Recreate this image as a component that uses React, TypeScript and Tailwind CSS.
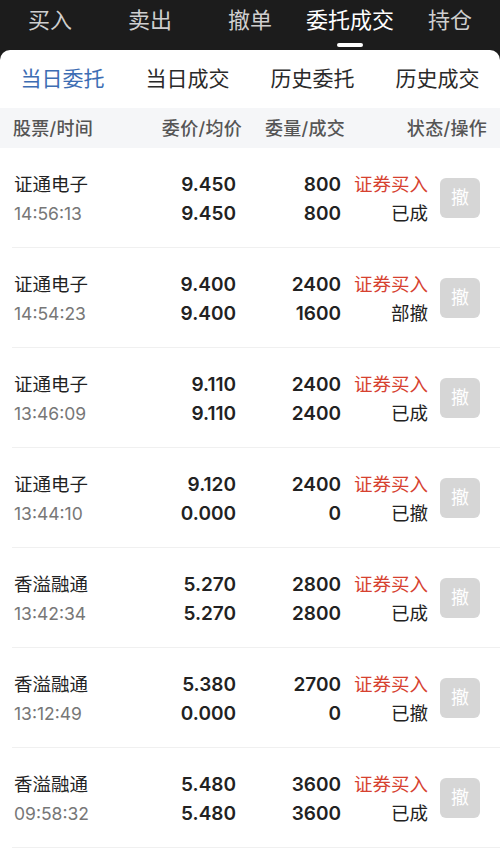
import React from "react";

const rows = [
  { name: "证通电子", time: "14:56:13", p1: "9.450", p2: "9.450", q1: "800", q2: "800", st: "已成" },
  { name: "证通电子", time: "14:54:23", p1: "9.400", p2: "9.400", q1: "2400", q2: "1600", st: "部撤" },
  { name: "证通电子", time: "13:46:09", p1: "9.110", p2: "9.110", q1: "2400", q2: "2400", st: "已成" },
  { name: "证通电子", time: "13:44:10", p1: "9.120", p2: "0.000", q1: "2400", q2: "0", st: "已撤" },
  { name: "香溢融通", time: "13:42:34", p1: "5.270", p2: "5.270", q1: "2800", q2: "2800", st: "已成" },
  { name: "香溢融通", time: "13:12:49", p1: "5.380", p2: "0.000", q1: "2700", q2: "0", st: "已撤" },
  { name: "香溢融通", time: "09:58:32", p1: "5.480", p2: "5.480", q1: "3600", q2: "3600", st: "已成" },
];

const font = { fontFamily: 'Inter, "Noto Sans CJK SC", sans-serif' };

export default function App() {
  return (
    <div className="w-[500px] h-[857px] overflow-hidden bg-[#1c1c1c]" style={font}>
      <div className="h-[50px] grid grid-cols-5 text-[22px]">
        {["买入", "卖出", "撤单", "委托成交", "持仓"].map((t, i) => (
          <div key={t} className="relative flex justify-center pt-[4px]">
            <span className={i === 3 ? "text-white" : "text-[#cfcfcf]"}>{t}</span>
            {i === 3 && (
              <div className="absolute left-1/2 -translate-x-1/2 top-[43px] w-[26px] h-[4px] rounded-full bg-white" />
            )}
          </div>
        ))}
      </div>
      <div className="bg-white rounded-t-[10px] h-[807px]">
        <div className="h-[58px] grid grid-cols-4 items-center text-[21px] text-[#2a2a2a]">
          {["当日委托", "当日成交", "历史委托", "历史成交"].map((t, i) => (
            <div key={t} className={"text-center " + (i === 0 ? "text-[#3d6db3]" : "")}>{t}</div>
          ))}
        </div>
        <div className="h-[40px] bg-[#f5f6f8] flex items-center text-[18px] tracking-[0.3px] text-[#555] font-medium px-[13px]">
          <div className="w-[130px]">股票/时间</div>
          <div className="w-[99px] text-right">委价/均价</div>
          <div className="w-[23px]" />
          <div className="w-[100px]">委量/成交</div>
          <div className="flex-1 text-right">状态/操作</div>
        </div>
        {rows.map((r, i) => (
          <div key={i} className="ml-[12px] border-b border-[#f0f0f0]">
            <div className="h-[99px] flex items-center pl-[2px] pt-[3px]">
              <div className="w-[130px] leading-[29px]">
                <div className="text-[18.5px] text-[#222]">{r.name}</div>
                <div className="text-[17.5px] text-[#777]">{r.time}</div>
              </div>
              <div className="w-[92px] text-right leading-[29px] text-[19px] font-semibold text-[#222]">
                <div>{r.p1}</div>
                <div>{r.p2}</div>
              </div>
              <div className="w-[105px] text-right leading-[29px] text-[19px] font-semibold text-[#222]">
                <div>{r.q1}</div>
                <div>{r.q2}</div>
              </div>
              <div className="w-[87px] text-right leading-[29px] text-[18.5px]">
                <div className="text-[#d6412f]">证券买入</div>
                <div className="text-[#222]">{r.st}</div>
              </div>
              <div className="ml-[12px] -mt-[3px] w-[40px] h-[40px] rounded-[6px] bg-[#d6d6d6] flex items-center justify-center text-white text-[18px]">
                撤
              </div>
            </div>
          </div>
        ))}
      </div>
    </div>
  );
}
